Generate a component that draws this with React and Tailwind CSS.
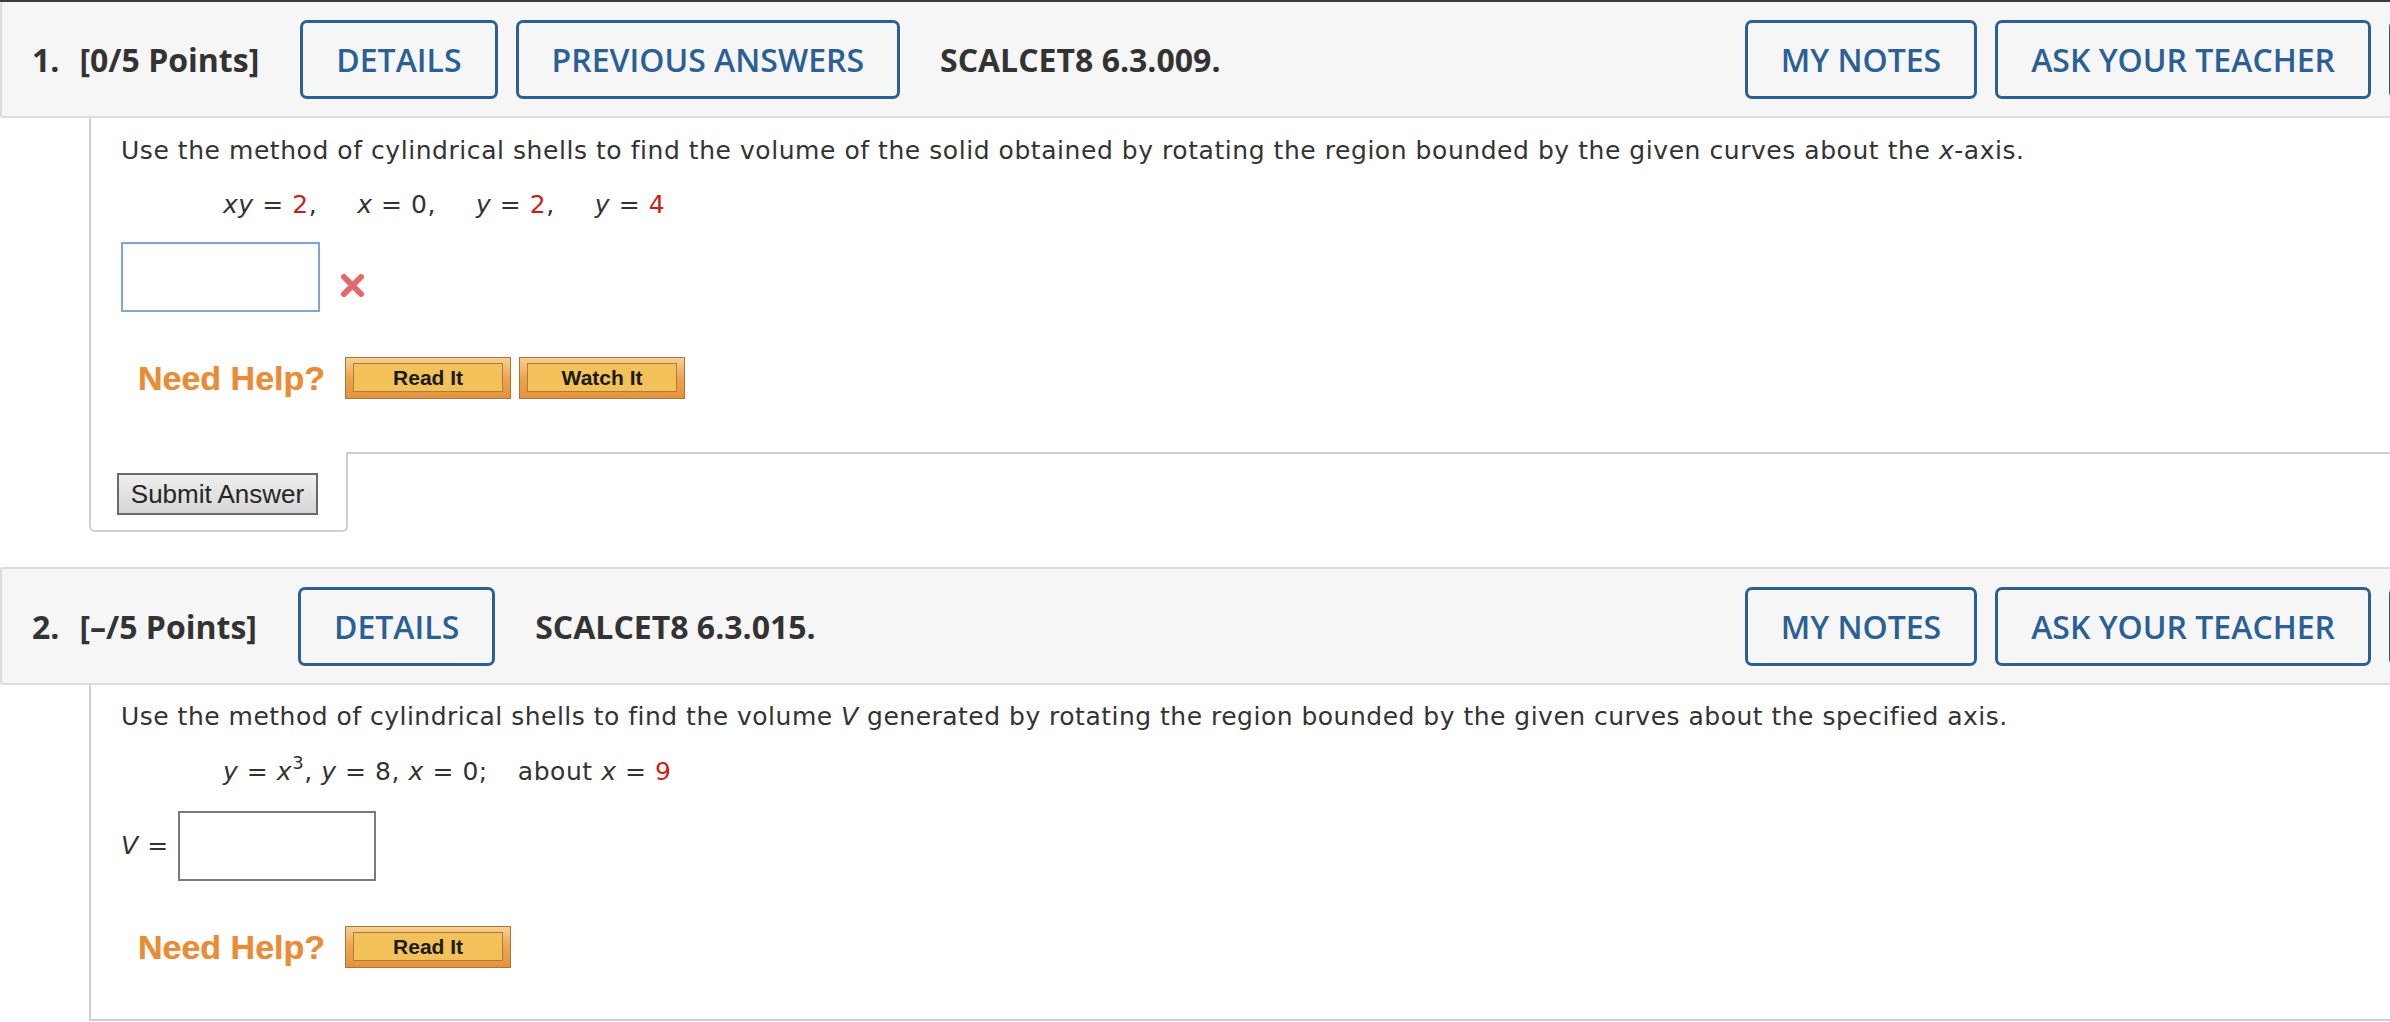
import React from 'react';

const qBase = "font-['DejaVu_Sans',Verdana,sans-serif] text-[25px] leading-[30px] text-[#333]";
const qText = `${qBase} tracking-[0.55px]`;

function OutlineButton({ children, className = '', label }) {
  return (
    <button
      aria-label={label}
      className={`flex h-[79px] shrink-0 items-center justify-center rounded-[7px] border-[3px] border-[#2b6095] px-[33px] text-[32px] font-semibold leading-none text-[#2b6095] ${className}`}
    >
      {children}
    </button>
  );
}

function QuestionHeader({ num, points, leftButtons, code, first }) {
  return (
    <div
      className={`flex items-center rounded-[3px] border-2 border-[#dcdcdc] bg-[#f6f6f6] pb-[17px] pl-[30px] pr-[24px] pt-[18px] font-['Open_Sans',sans-serif] ${first ? 'border-t-0' : ''}`}
    >
      <span className="text-[32px] font-bold text-[#333]">{num}</span>
      <span className="ml-[20px] text-[32px] font-bold text-[#333]">{points}</span>
      <div className="ml-[41px] flex gap-[18px]">
        {leftButtons.map((b) => (
          <OutlineButton key={b}>{b}</OutlineButton>
        ))}
      </div>
      <span className="ml-[40px] text-[32px] font-bold text-[#333]">{code}</span>
      <div className="ml-auto flex gap-[18px]">
        <OutlineButton>MY NOTES</OutlineButton>
        <OutlineButton>ASK YOUR TEACHER</OutlineButton>
        {/* next button, scrolled past the window edge */}
        <OutlineButton className="w-[380px]" label="Practice Another" />
      </div>
    </div>
  );
}

function HelpButton({ label }) {
  return (
    <button className="h-[42px] w-[166px] border border-[#a8773a] bg-linear-to-b from-[#f8cf92] via-[#eda450] to-[#e6923c] px-[7px] pb-[6px] pt-[5px]">
      <span className="flex h-full items-center justify-center border border-[#ad7b3d] bg-[#f2c15a] font-['Liberation_Sans',Arial,sans-serif] text-[21px] font-bold leading-none text-[#1b1b1b]">
        {label}
      </span>
    </button>
  );
}

function NeedHelp({ labels }) {
  return (
    <div className="ml-[17px] mt-[45px] flex items-center">
      <span className="font-['Liberation_Sans',Arial,sans-serif] text-[34px] font-bold leading-none text-[#e98c37] [text-shadow:0_0_1px_rgba(233,140,55,0.6)]">
        Need Help?
      </span>
      <div className="ml-[20px] flex gap-[8px]">
        {labels.map((l) => (
          <HelpButton key={l} label={l} />
        ))}
      </div>
    </div>
  );
}

function RedX() {
  return (
    <svg width="27" height="27" viewBox="0 0 27 27" className="mb-[13px] ml-[19px] self-end">
      <g stroke="#e2585d" strokeWidth="6" strokeLinecap="round" opacity="0.9">
        <line x1="5" y1="5" x2="22" y2="22" />
        <line x1="22" y1="5" x2="5" y2="22" />
      </g>
    </svg>
  );
}

const I = ({ children }) => <span className="italic">{children}</span>;
const R = ({ children }) => <span className="text-[#cc1f1a]">{children}</span>;

export default function App() {
  return (
    <div className="h-screen w-full overflow-hidden bg-white">
      <div className="w-[2795px]">
        <div className="h-[2px] bg-[#3b3b3b]" />

        {/* Question 1 */}
        <QuestionHeader
          first
          num="1."
          points="[0/5 Points]"
          leftButtons={['DETAILS', 'PREVIOUS ANSWERS']}
          code="SCALCET8 6.3.009."
        />
        <div className="ml-[89px] border-l-2 border-[#cfcfcf] pb-[53px] pl-[30px] pt-[18px]">
          <p className={qText}>
            Use the method of cylindrical shells to find the volume of the solid obtained by rotating the region bounded by the given curves about the <I>x</I>-axis.
          </p>
          <div className={`${qText} ml-[102px] mt-[24px] flex gap-[40px]`}>
            <span><I>xy</I> = <R>2</R>,</span>
            <span><I>x</I> = 0,</span>
            <span><I>y</I> = <R>2</R>,</span>
            <span><I>y</I> = <R>4</R></span>
          </div>
          <div className="mt-[22px] flex">
            <input className="h-[70px] w-[199px] border-2 border-[#80a4d4] bg-white shadow-[inset_0_1px_2px_rgba(0,0,0,0.08)]" />
            <RedX />
          </div>
          <NeedHelp labels={['Read It', 'Watch It']} />
        </div>
        <div className="ml-[89px] flex">
          <div className="w-[259px] rounded-b-[6px] border-2 border-t-0 border-[#cfcfcf] pb-[15px] pl-[26px] pt-[21px]">
            <button className="h-[42px] w-[201px] border-2 border-[#6a6a6a] bg-linear-to-b from-[#efefef] to-[#d6d6d6] font-['Liberation_Sans',Arial,sans-serif] text-[26px] leading-none text-[#262626]">
              Submit Answer
            </button>
          </div>
          <div className="flex-1 border-t-2 border-[#cfcfcf]" />
        </div>

        <div className="h-[35px]" />

        {/* Question 2 */}
        <QuestionHeader
          num="2."
          points="[–/5 Points]"
          leftButtons={['DETAILS']}
          code="SCALCET8 6.3.015."
        />
        <div className="ml-[89px] border-b-2 border-l-2 border-[#cfcfcf] pb-[51px] pl-[30px] pt-[17px]">
          <p className={`${qBase} tracking-[0.49px]`}>
            Use the method of cylindrical shells to find the volume <I>V</I> generated by rotating the region bounded by the given curves about the specified axis.
          </p>
          <div className={`${qText} ml-[102px] mt-[25px]`}>
            <I>y</I> = <I>x</I>
            <span className="relative -top-[11px] text-[18px] leading-none">3</span>, <I>y</I> = 8, <I>x</I> = 0;
            <span className="ml-[30px]">about</span> <I>x</I> = <R>9</R>
          </div>
          <div className="mt-[24px] flex items-center">
            <span className={qText}>
              <I>V</I> =
            </span>
            <input className="ml-[9px] h-[70px] w-[198px] border-2 border-[#7b7b7b] bg-white" />
          </div>
          <NeedHelp labels={['Read It']} />
        </div>
      </div>
    </div>
  );
}
